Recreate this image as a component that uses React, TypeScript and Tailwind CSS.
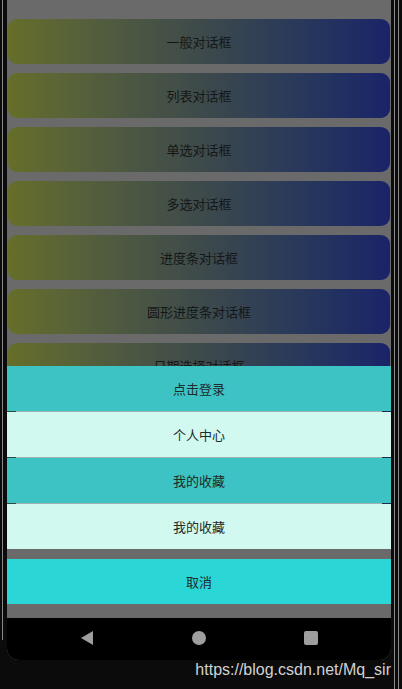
import React from "react";

const font = { fontFamily: '"Noto Sans CJK SC", "Noto Sans", sans-serif' };

const dialogs = ["一般对话框", "列表对话框", "单选对话框", "多选对话框", "进度条对话框", "圆形进度条对话框", "日期选择对话框"];

function SheetRow({ label, tone }: { label: string; tone: "teal" | "mint" }) {
    return (
        <div
            className={`h-[45px] flex items-center justify-center text-[13px] text-[#1f2a2a] ${
                tone === "teal" ? "bg-[#3dc3c3]" : "bg-[#d2f9f0]"
            }`}
        >
            {label}
        </div>
    );
}

function Divider() {
    return (
        <div className="h-[1px] bg-[#9fb4b2] flex justify-between">
            <span className="w-[9px] bg-[#2e4a3a]" />
            <span className="w-[9px] bg-[#1c2a55]" />
        </div>
    );
}

export default function App() {
    return (
        <div className="w-[402px] h-[689px] bg-[#0b0b0b] flex overflow-hidden" style={font}>
            {/* left bezel */}
            <div className="w-[7px] h-full flex">
                <div className="w-[2px]" />
                <div className="w-[1px] bg-[#8a8a8a] h-[640px]" />
            </div>

            <div className="w-[384px] flex flex-col">
                {/* screen */}
                <div className="h-[660px] bg-[#6a6a6a] flex flex-col rounded-b-[12px] overflow-hidden">
                    {/* dimmed list */}
                    <div className="h-[366px] overflow-hidden pt-[19px] px-[1px] flex flex-col gap-[9px]">
                        {dialogs.map((d) => (
                            <div
                                key={d}
                                className="h-[45px] shrink-0 rounded-[9px] bg-gradient-to-r from-[#666e28] via-[#3e4a4a] to-[#1b2368] flex items-center justify-center text-[13px] text-[#141717]"
                            >
                                {d}
                            </div>
                        ))}
                    </div>

                    {/* bottom sheet */}
                    <SheetRow label="点击登录" tone="teal" />
                    <Divider />
                    <SheetRow label="个人中心" tone="mint" />
                    <Divider />
                    <SheetRow label="我的收藏" tone="teal" />
                    <Divider />
                    <SheetRow label="我的收藏" tone="mint" />
                    <div className="h-[10px]" />
                    <div className="h-[45px] bg-[#2bd6d6] flex items-center justify-center text-[13px] text-[#1f2a2a]">取消</div>
                    <div className="h-[14px]" />

                    {/* nav bar */}
                    <div className="flex-1 bg-black flex items-center justify-between px-[73px] pb-[2px]">
                        <svg width="14" height="14" viewBox="0 0 14 14">
                            <polygon points="13,0 13,14 1,7" fill="#9e9e9e" />
                        </svg>
                        <div className="w-[14px] h-[14px] rounded-full bg-[#9e9e9e]" />
                        <div className="w-[14px] h-[14px] rounded-[2px] bg-[#9e9e9e]" />
                    </div>
                </div>

                <div className="flex-1 flex items-start justify-end -mt-[2px]">
                    <span className="text-[16px] text-[#d2d2d2]" style={{ fontFamily: '"Liberation Sans", Arial, sans-serif' }}>
                        https://blog.csdn.net/Mq_sir
                    </span>
                </div>
            </div>

            {/* right bezel */}
            <div className="w-[11px] h-full flex">
                <div className="w-[3px]" />
                <div className="w-[1px] bg-[#8a8a8a]" />
                <div className="w-[3px]" />
                <div className="w-[1px] bg-[#8a8a8a]" />
            </div>
        </div>
    );
}
